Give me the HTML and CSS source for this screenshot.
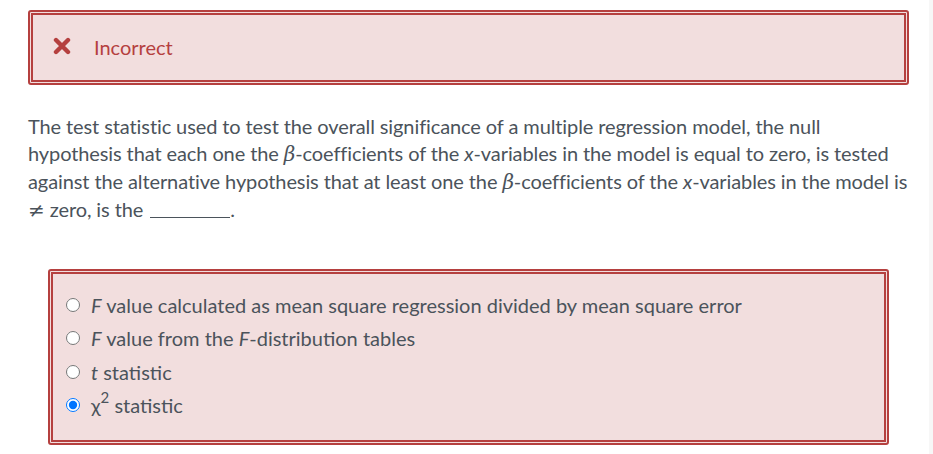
FILE: index.html
```html
<!DOCTYPE html>
<html>
<head>
<meta charset="utf-8">
<link rel="stylesheet" href="styles.css">
</head>
<body>
<div class="page">
  <div class="alert">
    <svg class="xicon" width="18" height="18" viewBox="0 0 18 18"><path d="M3 3 L15 15 M15 3 L3 15" stroke="#b5403f" stroke-width="4.4" stroke-linecap="round"/></svg>
    <span class="alert-text">Incorrect</span>
  </div>
  <p class="question">The test statistic used to test the overall significance of a multiple regression model, the null hypothesis that each one the <span class="beta">β</span>-coefficients of the <i>x</i>-variables in the model is equal to zero, is tested against the alternative hypothesis that at least one the <span class="beta">β</span>-coefficients of the <i>x</i>-variables in the model is <span class="neq">≠</span> zero, is the <span class="blank"></span>.</p>
  <div class="answers">
    <label class="opt"><input type="radio" name="a"><span><i>F</i> value calculated as mean square regression divided by mean square error</span></label>
    <label class="opt"><input type="radio" name="a"><span><i>F</i> value from the <i>F</i>-distribution tables</span></label>
    <label class="opt"><input type="radio" name="a"><span><i>t</i> statistic</span></label>
    <label class="opt"><input type="radio" name="a" checked><span>χ<sup>2</sup> statistic</span></label>
  </div>
</div>
<div class="scrollstrip"></div>
</body>
</html>
```
FILE: styles.css
```css
html, body { margin: 0; padding: 0; background: #fff; }
body {
  font-family: Lato, "Noto Sans", sans-serif;
  color: #4b535b;
  font-size: 20px;
}
.page {
  width: 881px;
  padding: 10px 0 0 28px;
}
.alert {
  box-sizing: border-box;
  height: 75px;
  border: 5px double #b5403f;
  border-radius: 3px;
  background: #f2dede;
  display: flex;
  align-items: center;
  padding-left: 20px;
  padding-bottom: 1px;
}
.xicon { display: block; margin-top: -2px; }
.alert-text {
  color: #b5403f;
  margin-left: 23px;
  font-size: 20px;
}
.question {
  margin: 28px 0 0 0;
  font-size: 20px;
  line-height: 27px;
  letter-spacing: -0.1px;
}
.beta {
  font-family: "DejaVu Serif", "Liberation Serif", serif;
  font-style: italic;
  font-size: 20px;
}
.neq {
  font-family: "DejaVu Sans", sans-serif;
  font-size: 20px;
  line-height: 0;
}
.blank {
  display: inline-block;
  width: 80px;
  height: 18px;
  border-bottom: 1px solid #4b535b;
  margin-left: 2px;
  vertical-align: -1px;
}
.question i { font-style: italic; }
.answers {
  box-sizing: border-box;
  margin: 46px 0 0 20px;
  width: 841px;
  height: 176px;
  border: 5px double #b5403f;
  border-radius: 3px;
  background: #f2dede;
  padding: 18px 0 0 13px;
  display: flex;
  flex-direction: column;
  gap: 8.5px;
}
.opt {
  display: flex;
  align-items: center;
  height: 25px;
}
.opt input {
  margin: 0 11px 0 0;
  width: 14px;
  height: 14px;
}
.opt sup { font-size: 15px; line-height: 0; position: relative; top: -2px; }
.scrollstrip {
  position: fixed;
  top: 0;
  right: 0;
  width: 4px;
  height: 100%;
  background: #f7f7f7;
}
```
